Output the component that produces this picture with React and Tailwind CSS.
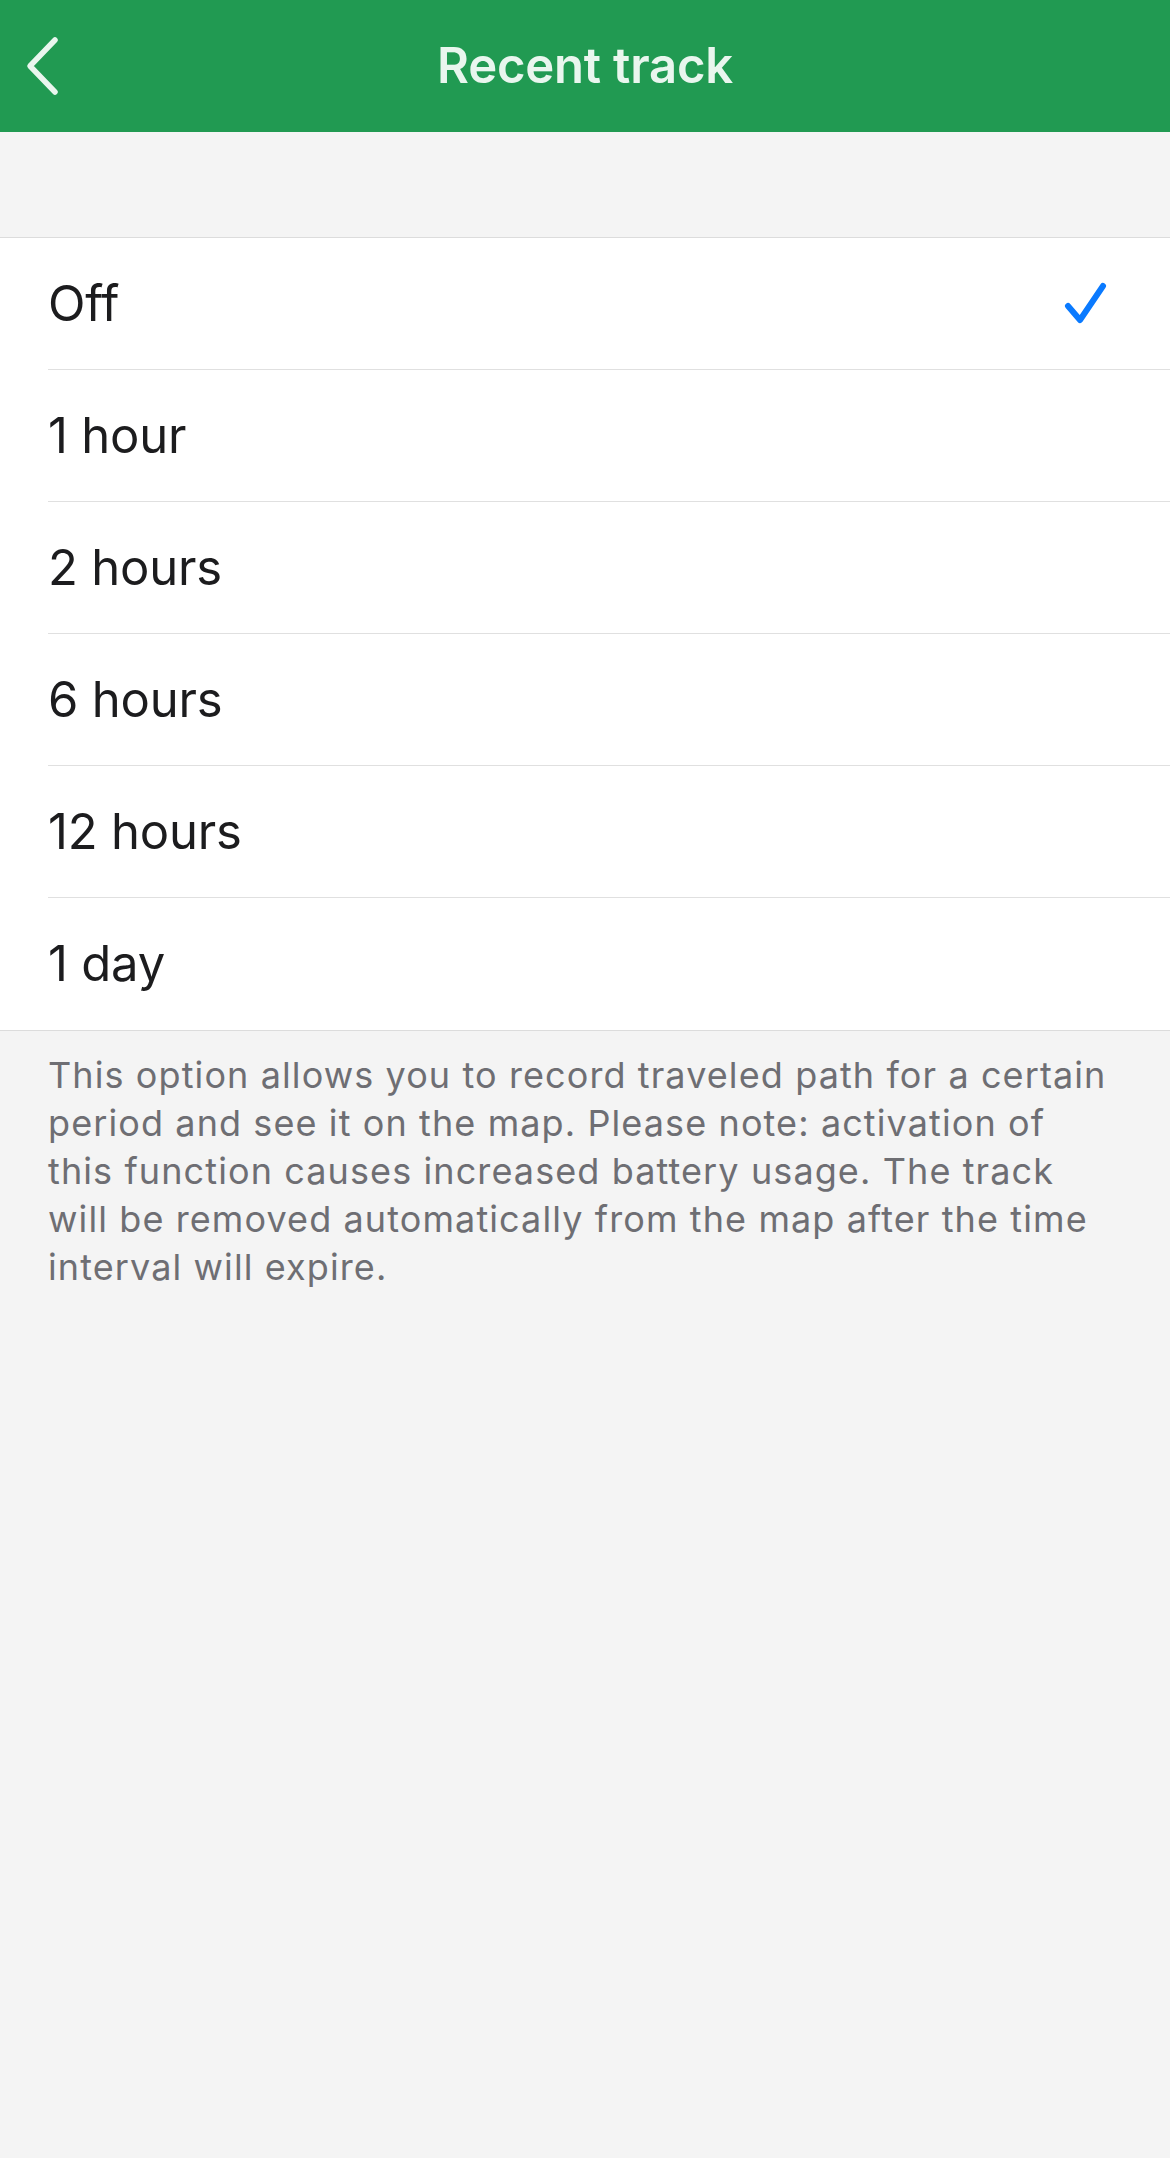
import React from "react";

const options = ["Off", "1 hour", "2 hours", "6 hours", "12 hours", "1 day"];

const note = [
  "This option allows you to record traveled path for a certain",
  "period and see it on the map. Please note: activation of",
  "this function causes increased battery usage. The track",
  "will be removed automatically from the map after the time",
  "interval will expire.",
];

function BackChevron() {
  return (
    <svg width="38" height="60" viewBox="0 0 38 60" fill="none">
      <path
        d="M33 4 L8 30 L33 56"
        stroke="#e9f6ee"
        strokeWidth="5.5"
        strokeLinecap="round"
        strokeLinejoin="round"
      />
    </svg>
  );
}

function Check() {
  return (
    <svg width="50" height="50" viewBox="0 0 50 50" fill="none">
      <path
        d="M6 27 L18 41 L41 7"
        stroke="#0a7aff"
        strokeWidth="6"
        strokeLinecap="round"
        strokeLinejoin="round"
      />
    </svg>
  );
}

export default function App() {
  const selected = 0;
  return (
    <div
      className="min-h-[2158px] w-full bg-[#f4f4f4]"
      style={{ fontFamily: "Inter, 'Noto Sans', sans-serif" }}
    >
      <header className="relative flex h-[132px] items-center justify-center bg-[#219a52]">
        <button className="absolute left-[22px] top-[36px] flex items-center">
          <BackChevron />
        </button>
        <h1 className="text-[49px] font-semibold tracking-[-0.2px] text-[#e9f6ee]">
          Recent track
        </h1>
      </header>

      <div className="h-[105px]" />

      <ul className="border-y border-[#dcdcdc] bg-white">
        {options.map((label, i) => (
          <li key={label} className="pl-[48px]">
            <div
              className={`flex h-[132px] items-center justify-between pr-[58px] ${
                i < options.length - 1 ? "border-b border-[#e0e0e0]" : ""
              }`}
            >
              <span className="text-[49px] font-normal tracking-[-0.2px] text-[#1c1c1e]">
                {label}
              </span>
              {i === selected && <Check />}
            </div>
          </li>
        ))}
      </ul>

      <p className="px-[48px] pt-[20px] text-[36px] leading-[48px] tracking-[1.1px] text-[#6e6e73]">
        {note.map((line) => (
          <span key={line} className="block whitespace-nowrap">
            {line}
          </span>
        ))}
      </p>
    </div>
  );
}
